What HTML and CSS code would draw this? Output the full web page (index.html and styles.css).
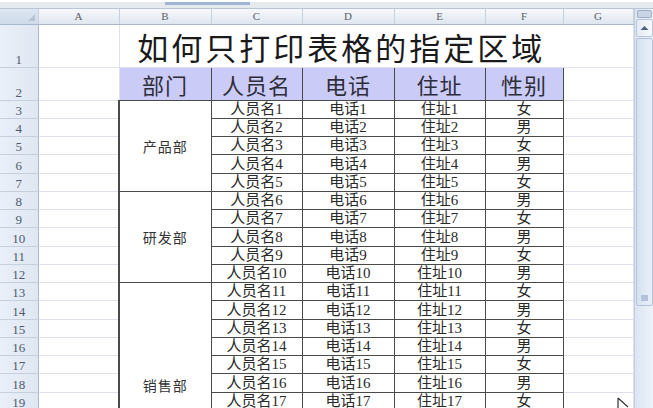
FILE: index.html
```html
<!DOCTYPE html>
<html lang="zh">
<head>
<meta charset="utf-8">
<title>如何只打印表格的指定区域</title>
<link rel="stylesheet" href="styles.css">
</head>
<body>
<div class="topbar"><div class="tab"></div></div>
<div class="main">
<table class="sheet">
<colgroup>
<col class="c-rh"><col class="c-a"><col class="c-b"><col class="c-c"><col class="c-d"><col class="c-e"><col class="c-f"><col class="c-g">
</colgroup>
<tr class="colhead">
<td class="corner"><span class="tri"></span></td><td>A</td><td>B</td><td>C</td><td>D</td><td>E</td><td>F</td><td>G</td>
</tr>
<tr class="r-title">
<td class="rh">1</td><td class="g"></td>
<td class="title" colspan="5">如何只打印表格的指定区域</td>
<td class="g"></td>
</tr>
<tr class="r-head">
<td class="rh">2</td><td class="g"></td>
<td class="th">部门</td><td class="th">人员名</td><td class="th">电话</td><td class="th">住址</td><td class="th">性别</td>
<td class="g"></td>
</tr>
<tr class="r"><td class="rh">3</td><td class="g"></td><td class="dept" rowspan="5">产品部</td><td class="d">人员名1</td><td class="d">电话1</td><td class="d">住址1</td><td class="d">女</td><td class="g"></td></tr>
<tr class="r"><td class="rh">4</td><td class="g"></td><td class="d">人员名2</td><td class="d">电话2</td><td class="d">住址2</td><td class="d">男</td><td class="g"></td></tr>
<tr class="r"><td class="rh">5</td><td class="g"></td><td class="d">人员名3</td><td class="d">电话3</td><td class="d">住址3</td><td class="d">女</td><td class="g"></td></tr>
<tr class="r r19"><td class="rh">6</td><td class="g"></td><td class="d">人员名4</td><td class="d">电话4</td><td class="d">住址4</td><td class="d">男</td><td class="g"></td></tr>
<tr class="r"><td class="rh">7</td><td class="g"></td><td class="d">人员名5</td><td class="d">电话5</td><td class="d">住址5</td><td class="d">女</td><td class="g"></td></tr>
<tr class="r"><td class="rh">8</td><td class="g"></td><td class="dept" rowspan="5">研发部</td><td class="d">人员名6</td><td class="d">电话6</td><td class="d">住址6</td><td class="d">男</td><td class="g"></td></tr>
<tr class="r"><td class="rh">9</td><td class="g"></td><td class="d">人员名7</td><td class="d">电话7</td><td class="d">住址7</td><td class="d">女</td><td class="g"></td></tr>
<tr class="r r19"><td class="rh">10</td><td class="g"></td><td class="d">人员名8</td><td class="d">电话8</td><td class="d">住址8</td><td class="d">男</td><td class="g"></td></tr>
<tr class="r"><td class="rh">11</td><td class="g"></td><td class="d">人员名9</td><td class="d">电话9</td><td class="d">住址9</td><td class="d">女</td><td class="g"></td></tr>
<tr class="r"><td class="rh">12</td><td class="g"></td><td class="d">人员名10</td><td class="d">电话10</td><td class="d">住址10</td><td class="d">男</td><td class="g"></td></tr>
<tr class="r"><td class="rh">13</td><td class="g"></td><td class="dept sales" rowspan="7">销售部</td><td class="d">人员名11</td><td class="d">电话11</td><td class="d">住址11</td><td class="d">女</td><td class="g"></td></tr>
<tr class="r r19"><td class="rh">14</td><td class="g"></td><td class="d">人员名12</td><td class="d">电话12</td><td class="d">住址12</td><td class="d">男</td><td class="g"></td></tr>
<tr class="r"><td class="rh">15</td><td class="g"></td><td class="d">人员名13</td><td class="d">电话13</td><td class="d">住址13</td><td class="d">女</td><td class="g"></td></tr>
<tr class="r"><td class="rh">16</td><td class="g"></td><td class="d">人员名14</td><td class="d">电话14</td><td class="d">住址14</td><td class="d">男</td><td class="g"></td></tr>
<tr class="r"><td class="rh">17</td><td class="g"></td><td class="d">人员名15</td><td class="d">电话15</td><td class="d">住址15</td><td class="d">女</td><td class="g"></td></tr>
<tr class="r r19"><td class="rh">18</td><td class="g"></td><td class="d">人员名16</td><td class="d">电话16</td><td class="d">住址16</td><td class="d">男</td><td class="g"></td></tr>
<tr class="r"><td class="rh">19</td><td class="g"></td><td class="d">人员名17</td><td class="d">电话17</td><td class="d">住址17</td><td class="d">女</td><td class="g"></td></tr>
</table>
<div class="vscroll">
<div class="split"></div>
<div class="arrow"><svg width="9" height="6" viewBox="0 0 9 6"><path d="M0.5 5 L4.5 1 L8.5 5 Z" fill="#4d5f7a"/></svg></div>
<div class="thumb"><span class="grip"></span></div>
<div class="track"></div>
</div>
</div>
<svg class="cursor" width="14" height="12" viewBox="0 0 14 12"><path d="M1 1 L1 12 M1 1 L11 10" stroke="#333" stroke-width="1.2" fill="none"/></svg>
</body>
</html>
```
FILE: styles.css
```css
html, body {
  margin: 0;
  padding: 0;
  background: #ffffff;
  width: 653px;
  height: 408px;
  overflow: hidden;
}
body {
  position: relative;
  font-family: "Liberation Serif", "Noto Sans CJK SC", serif;
}
.topbar {
  height: 7px;
  background: #e6e9ee;
  border-bottom: 1px solid #b9c4d4;
  box-sizing: border-box;
}
.tab {
  margin-left: 165px;
  width: 85px;
  height: 3px;
  margin-top: 2px;
  background: #9fb4d6;
}
.main {
  display: flex;
  align-items: flex-start;
}
.sheet {
  border-collapse: collapse;
  table-layout: fixed;
  width: 633px;
  flex: none;
}
.c-rh { width: 38px; }
.c-a { width: 81px; }
.c-b { width: 92px; }
.c-c { width: 91px; }
.c-d { width: 92px; }
.c-e { width: 91px; }
.c-f { width: 78px; }
.c-g { width: 70px; }
.sheet td {
  padding: 0;
  overflow: hidden;
  white-space: nowrap;
}
.colhead td {
  height: 15px;
  background: linear-gradient(#f6f8fb, #dfe6ef);
  border-right: 1px solid #c7d0dc;
  border-bottom: 1px solid #a9b8cc;
  text-align: center;
  font-size: 11px;
  line-height: 15px;
  color: #5a5f68;
  font-family: "Liberation Serif", serif;
}
.colhead td.corner {
  position: relative;
  background: linear-gradient(#dde6f2, #cfdbea);
}
.tri {
  position: absolute;
  right: 3px;
  bottom: 3px;
  width: 0;
  height: 0;
  border-left: 7px solid transparent;
  border-bottom: 7px solid #b7c4d6;
}
.rh {
  background: linear-gradient(90deg, #e9eff8, #dfe7f3);
  border-right: 1px solid #a9b8cc;
  border-bottom: 1px solid #c5cfdd;
  text-align: center;
  vertical-align: bottom;
  font-size: 13px;
  line-height: 15px;
  color: #4f5b6e;
  font-family: "Liberation Serif", serif;
}
.g {
  border-right: 1px solid #dde2ea;
  border-bottom: 1px solid #dde2ea;
}
.r-title td { height: 42px; }
.r-head td { height: 32px; }
.r td { height: 17px; }
.r19 td { height: 18px; }
.title {
  text-align: center;
  vertical-align: bottom;
  font-family: "Noto Sans CJK SC", sans-serif;
  font-size: 31px;
  line-height: 40px;
  color: #1a1a1a;
  border-bottom: 1px solid #dde2ea;
  letter-spacing: 3px;
  padding-left: 0;
}
.th {
  background: #cbcbf7;
  border: 1px solid #4a4a4a;
  text-align: center;
  vertical-align: middle;
  font-family: "Noto Sans CJK SC", sans-serif;
  font-size: 22px;
  line-height: 30px;
  color: #2e2e3a;
  letter-spacing: 1px;
}
.d {
  border: 1px solid #4a4a4a;
  text-align: center;
  vertical-align: middle;
  font-family: "Liberation Serif", "Noto Sans CJK SC", serif;
  font-size: 15px;
  line-height: 15px;
  color: #2a2a2a;
}
.dept {
  border: 1px solid #4a4a4a;
  border-left-width: 2px;
  text-align: center;
  vertical-align: middle;
  font-family: "Noto Sans CJK SC", sans-serif;
  font-size: 14px;
  color: #333;
  letter-spacing: 1px;
}
.dept.sales {
  vertical-align: bottom;
  padding-bottom: 15px;
  line-height: 20px;
}
.vscroll {
  width: 20px;
  height: 401px;
  flex: none;
  display: flex;
  flex-direction: column;
  background: linear-gradient(90deg, #dbe5f2, #eef3fa);
  border-left: 1px solid #c4cfdd;
  box-sizing: border-box;
}
.split {
  height: 6px;
  margin: 1px 2px 0;
  background: #c9d5e6;
  border: 1px solid #9fb0c8;
  border-radius: 2px;
}
.arrow {
  height: 16px;
  display: flex;
  align-items: center;
  justify-content: center;
  margin: 1px 1px 0;
  background: linear-gradient(90deg, #e3ebf6, #f7f9fc);
  border: 1px solid #b8c6d9;
  border-radius: 2px;
}
.thumb {
  height: 266px;
  margin: 1px 1px 0;
  background: linear-gradient(90deg, #d6e2f2, #e8eff9);
  border: 1px solid #b3c3d9;
  border-radius: 2px;
  position: relative;
}
.grip {
  position: absolute;
  left: 4px;
  right: 4px;
  bottom: 4px;
  height: 6px;
  background: #b3c3da;
}
.track {
  flex: 1;
}
.cursor {
  position: absolute;
  left: 617px;
  top: 397px;
}
```
